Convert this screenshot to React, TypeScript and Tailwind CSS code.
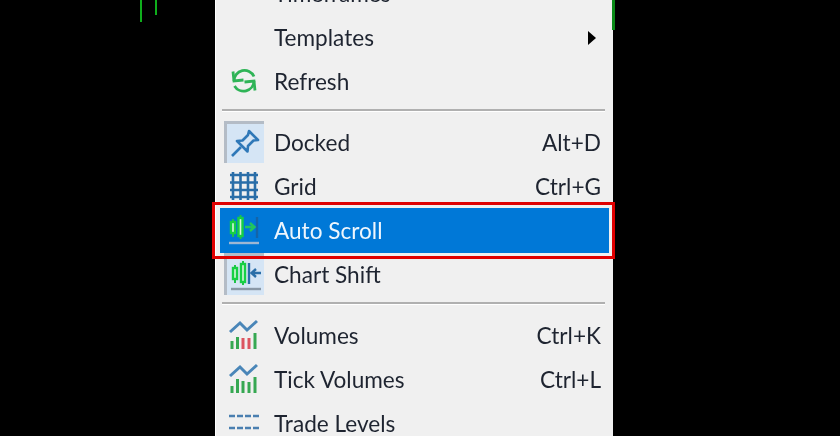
import React from "react";

const Refresh = () => (
  <svg width="30" height="30" viewBox="0 0 30 30" fill="none" stroke="#2fb457" strokeWidth="2.800">
    <path d="M5 15A10.500 10.500 0 0 1 25 10.500" />
    <path d="M4 5.500 5 15l9.500-1" />
    <path d="M25 15A10.500 10.500 0 0 1 5.500 20" />
    <path d="M26 24.500 25 15l-9.500 1" />
  </svg>
);

const Pin = () => (
  <svg width="30" height="30" viewBox="0 0 30 30" fill="none" stroke="#2f78b8" strokeWidth="2.600" className="mr-[2px] mt-[-2px]">
    <path d="M19 3 28 12l-4.500.5L18 18l-.5 5.500L7 13l5.500-.5L18 7z" strokeLinejoin="round" />
    <path d="M11 19 2 28" />
  </svg>
);

const Grid = () => (
  <svg width="28" height="28" viewBox="0 0 28 28" fill="none" stroke="#2a6ea8" strokeWidth="2.600">
    <path d="M3 0v28M10.500 0v28M18 0v28M25 0v28M0 3h28M0 10.500h28M0 18h28M0 25h28" />
  </svg>
);

const Candles = ({ shift }: { shift: boolean }) => {
  const right = shift ? 13 : 12.5;
  return (
    <svg width="32" height="30" viewBox="0 0 32 30" fill="none">
      <path d={`M5 4v18M${right} 0v24`} stroke="#1fc247" strokeWidth="2" />
      <rect x="3" y="7" width="4" height="11" fill="#d8f5dc" stroke="#16d044" strokeWidth="2.400" />
      <rect x={right - 2} y="3" width="4" height="18" fill="#d8f5dc" stroke="#16d044" strokeWidth="2.400" />
      {shift ? (
        <>
          <path d="M19 2v21" stroke="#2a6ea8" strokeWidth="2.400" />
          <path d="M31 12h-9M26 8l-4.500 4 4.500 4" stroke="#2a6ea8" strokeWidth="2.400" />
        </>
      ) : (
        <>
          <path d="M29 2v21" stroke="#1464a8" strokeWidth="2.400" />
          <path d="M17 12h9M22 8l4.500 4-4.500 4" stroke="#22c55e" strokeWidth="2.400" />
        </>
      )}
      <path d="M1 28h30" stroke={shift ? "#8a98a6" : "#9db7d3"} strokeWidth="2.400" />
    </svg>
  );
};

const Volumes = ({ tick }: { tick: boolean }) => {
  const bars = tick
    ? ([
        [4, 23, "#36a852"],
        [9.5, 16, "#36a852"],
        [15, 18, "#36a852"],
        [21, 19, "#36a852"],
        [27, 14, "#36a852"],
      ] as const)
    : ([
        [4, 22, "#36a852"],
        [9.5, 18, "#36a852"],
        [15, 19, "#dc5560"],
        [21, 19, "#dc5560"],
        [27, 14, "#36a852"],
      ] as const);
  return (
    <svg width="32" height="32" viewBox="0 0 32 32" fill="none">
      <path d="M2 13 12 4l7 7L29 2" stroke="#4a86b8" strokeWidth="3" />
      {bars.map(([x, y, c]) => (
        <path key={x} d={`M${x} ${y}V30`} stroke={c} strokeWidth="3" />
      ))}
    </svg>
  );
};

const Levels = () => (
  <svg width="30" height="16" viewBox="0 0 30 16" fill="none" stroke="#4a7fb0" strokeWidth="2.400" strokeDasharray="6 2" className="mt-[-2px]">
    <path d="M0 2h30M0 14h30" />
  </svg>
);

type RowProps = {
  label: string;
  keys?: string;
  icon?: React.ReactNode;
  boxed?: boolean;
  active?: boolean;
  arrow?: boolean;
};

const Row = ({ label, keys, icon, boxed, active, arrow }: RowProps) => (
  <div className={`ml-[4px] mr-[4px] flex h-[44px] items-center pr-[8px] ${active ? "bg-[#0078d7] text-[#eef6fd] shadow-[0_-1px_0_#0078d7]" : "text-[#1e2430]"}`}>
    <div
      className={`ml-[4px] flex h-[42px] w-[40px] shrink-0 items-center justify-center self-start ${
        boxed ? "border-l-[3px] border-t-[3px] border-[#b4bcc6] bg-[#d5e5f5]" : ""
      }`}
    >
      {icon}
    </div>
    <span className="ml-[10px] flex-1">{label}</span>
    {keys && <span>{keys}</span>}
    {arrow && <span className="mr-[5px] h-0 w-0 border-y-[7px] border-l-[8px] border-y-transparent border-l-black" />}
  </div>
);

const Sep = () => (
  <div className="mb-[9px] ml-[6px] mr-[8px] mt-[5px] h-[3px] border-t-[2px] border-b border-t-[#b0b0b0] border-b-white" />
);

export default function App() {
  return (
    <div className="relative h-[436px] w-[840px] overflow-hidden bg-black font-['Lato','Open_Sans',sans-serif] text-[22.6px] leading-none blur-[0.5px]">
      <div className="absolute left-[140px] top-0 h-[22px] w-[2px] bg-[#0fae1c]" />
      <div className="absolute left-[155px] top-0 h-[15px] w-[2px] bg-[#0fae1c]" />
      <div className="absolute left-[612px] top-0 h-[30px] w-[3px] bg-[#0a8a18]" />
      <div className="ml-[215px] mt-[-28px] w-[398px] border-l border-white bg-[#f0f0f0]">
        <Row label="Timeframes" />
        <Row label="Templates" arrow />
        <Row label="Refresh" icon={<Refresh />} />
        <Sep />
        <Row label="Docked" keys="Alt+D" icon={<Pin />} boxed />
        <Row label="Grid" keys="Ctrl+G" icon={<Grid />} />
        <Row label="Auto Scroll" icon={<Candles shift={false} />} active />
        <Row label="Chart Shift" icon={<Candles shift />} boxed />
        <Sep />
        <Row label="Volumes" keys="Ctrl+K" icon={<Volumes tick={false} />} />
        <Row label="Tick Volumes" keys="Ctrl+L" icon={<Volumes tick />} />
        <Row label="Trade Levels" icon={<Levels />} />
      </div>
      <div className="absolute left-[212px] top-[202px] h-[57px] w-[403px] border-[3px] border-[#e00000]" />
    </div>
  );
}
